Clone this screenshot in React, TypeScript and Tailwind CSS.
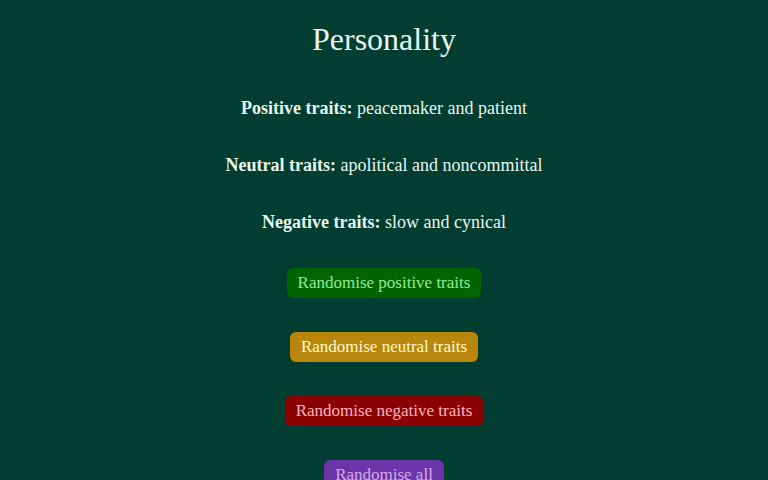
import React from 'react';

const traits = [
  { label: 'Positive traits:', value: 'peacemaker and patient' },
  { label: 'Neutral traits:', value: 'apolitical and noncommittal' },
  { label: 'Negative traits:', value: 'slow and cynical' },
];

const buttons = [
  { text: 'Randomise positive traits', className: 'bg-[#006400] text-[#90ee90]' },
  { text: 'Randomise neutral traits', className: 'bg-[#b8860b] text-[#fff8d0]' },
  { text: 'Randomise negative traits', className: 'bg-[#8b0000] text-[#ffb6c1]' },
  { text: 'Randomise all', className: 'bg-[#6a35a8] text-[#d7a8e8]' },
];

export default function App() {
  return (
    <div className="min-h-[480px] bg-[#013d31] font-['Liberation_Serif',serif] text-[#eaf6f0] flex flex-col items-center">
      <h1 className="mt-[21px] text-[32px] leading-[37px]">Personality</h1>

      {traits.map((t, i) => (
        <p
          key={t.label}
          className={`text-[18px] leading-[21px] ${i === 0 ? 'mt-[40px]' : 'mt-[36px]'}`}
        >
          <b>{t.label}</b> {t.value}
        </p>
      ))}

      <div className="mt-[35px] flex flex-col items-center gap-[34px]">
        {buttons.map((b) => (
          <button
            key={b.text}
            className={`h-[30px] px-[11px] rounded-[6px] text-[17px] leading-[20px] ${b.className}`}
          >
            {b.text}
          </button>
        ))}
      </div>
    </div>
  );
}
